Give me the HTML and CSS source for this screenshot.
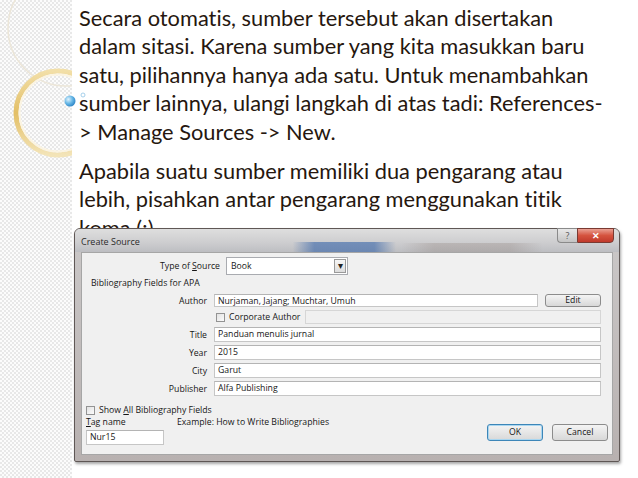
FILE: index.html
```html
<!DOCTYPE html>
<html>
<head>
<meta charset="utf-8">
<link rel="stylesheet" href="styles.css">
</head>
<body>
<div class="slide">
  <div class="strip"></div>
  <svg class="deco" width="100" height="180" viewBox="0 0 100 180">
    <defs>
      <clipPath id="clipstrip"><rect x="0" y="0" width="72" height="180"/></clipPath>
      <linearGradient id="gold" x1="0" y1="0" x2="0" y2="1">
        <stop offset="0" stop-color="#f2dfa8"/>
        <stop offset="0.5" stop-color="#e3bf66"/>
        <stop offset="1" stop-color="#f3e4b8"/>
      </linearGradient>
      <radialGradient id="blue" cx="0.35" cy="0.35" r="0.7">
        <stop offset="0" stop-color="#dff2fd"/>
        <stop offset="0.55" stop-color="#67b7e6"/>
        <stop offset="1" stop-color="#2d84c6"/>
      </radialGradient>
    </defs>
    <g clip-path="url(#clipstrip)">
      <circle cx="66" cy="28" r="58" fill="none" stroke="#ece6d8" stroke-width="1.5"/>
      <circle cx="58" cy="113" r="42" fill="none" stroke="url(#gold)" stroke-width="5"/>
      <circle cx="58" cy="113" r="38.5" fill="none" stroke="#fbf4e2" stroke-width="2"/>
    </g>
    <circle cx="70" cy="101" r="5.5" fill="url(#blue)"/>
    <circle cx="83" cy="95" r="2" fill="none" stroke="#8fc4e6" stroke-width="0.8"/>
  </svg>
  <div class="main">
    <p class="para">Secara otomatis, sumber tersebut akan disertakan<br>dalam sitasi. Karena sumber yang kita masukkan baru<br>satu, pilihannya hanya ada satu. Untuk menambahkan<br>sumber lainnya, ulangi langkah di atas tadi: References-<br>&gt; Manage Sources -&gt; New.</p>
    <p class="para">Apabila suatu sumber memiliki dua pengarang atau<br>lebih, pisahkan antar pengarang menggunakan titik<br>koma (;).</p>

    <div class="dialog">
      <div class="titlebar">
        <span class="title">Create Source</span>
        <div class="controls">
          <span class="btn-help">?</span>
          <span class="btn-close">✕</span>
        </div>
      </div>
      <div class="body">
        <div class="type-row">
          <span class="type-label">Type of <u>S</u>ource</span>
          <div class="select"><span class="select-text">Book</span><span class="select-arrow">▾</span></div>
        </div>
        <div class="section-head">Bibliography Fields for APA</div>
        <div class="fields">
          <span class="label">Author</span>
          <div class="field-line">
            <div class="input grow">Nurjaman, Jajang; Muchtar, Umuh</div>
            <span class="button edit">Edit</span>
          </div>
          <span class="label"></span>
          <div class="field-line corp">
            <span class="check"></span>
            <span class="check-text">Corporate Author</span>
            <div class="input disabled grow"></div>
          </div>
          <span class="label">Title</span>
          <div class="input">Panduan menulis jurnal</div>
          <span class="label">Year</span>
          <div class="input">2015</div>
          <span class="label">City</span>
          <div class="input">Garut</div>
          <span class="label">Publisher</span>
          <div class="input">Alfa Publishing</div>
        </div>
        <div class="show-row">
          <span class="check"></span>
          <span class="check-text">Show <u>A</u>ll Bibliography Fields</span>
        </div>
        <div class="footer">
          <div class="tag-col">
            <span class="tag-label"><u>T</u>ag name</span>
            <div class="input tag-input">Nur15</div>
          </div>
          <span class="example">Example: How to Write Bibliographies</span>
          <div class="actions">
            <span class="button ok">OK</span>
            <span class="button">Cancel</span>
          </div>
        </div>
      </div>
    </div>
  </div>
</div>
</body>
</html>
```

FILE: styles.css
```css
html, body {
  margin: 0;
  padding: 0;
  background: #ffffff;
}

.slide {
  position: relative;
  width: 638px;
  height: 478px;
  display: flex;
  overflow: hidden;
  background: #ffffff;
}

.strip {
  width: 72px;
  flex: none;
  background: repeating-conic-gradient(#e8e8e8 0 25%, #fcfcfc 0 50%) 0 0 / 4px 4px;
}

.deco {
  position: absolute;
  left: 0;
  top: 0;
  pointer-events: none;
}

.main {
  position: relative;
  flex: 1;
  padding: 4px 0 0 7px;
}

.para {
  margin: 0 0 11px 0;
  font-family: "Lato", "Open Sans", sans-serif;
  font-size: 21.8px;
  line-height: 28.4px;
  color: #26170f;
  white-space: nowrap;
  font-variant-ligatures: none;
}

/* Dialog window */
.dialog {
  position: absolute;
  left: 2px;
  top: 228px;
  width: 546px;
  height: 234px;
  box-sizing: border-box;
  border: 1px solid #5f5755;
  border-radius: 6px 6px 2px 2px;
  background: linear-gradient(#cbc8c8, #b8b1b0);
  padding: 0 6px 6px 6px;
  display: flex;
  flex-direction: column;
  box-shadow: 1px 2px 3px rgba(0, 0, 0, 0.35);
  font-family: "Open Sans", "Noto Sans", sans-serif;
  font-size: 8.7px;
  color: #161616;
}

.titlebar {
  height: 23px;
  margin: 0 -6px;
  padding: 0 5px 0 6px;
  display: flex;
  justify-content: space-between;
  align-items: flex-start;
  border-radius: 5px 5px 0 0;
  background:
    linear-gradient(90deg, rgba(40, 90, 165, 0) 40%, rgba(40, 90, 165, 0.55) 44%, rgba(40, 90, 165, 0.55) 55%, rgba(40, 90, 165, 0) 59%) 0 100% / 100% 45% no-repeat,
    linear-gradient(90deg, rgba(120, 100, 90, 0) 60%, rgba(120, 100, 90, 0.22) 66%, rgba(120, 100, 90, 0.22) 80%, rgba(120, 100, 90, 0) 86%) 0 100% / 100% 40% no-repeat,
    linear-gradient(#dedede, #cdcdcf 60%, #bdbec2);
}

.title {
  padding-top: 6px;
  font-size: 9px;
  color: #2a2a2a;
}

.controls {
  display: flex;
  margin-top: -1px;
}

.btn-help {
  width: 20px;
  height: 15px;
  box-sizing: border-box;
  border: 1px solid #8a8a8a;
  border-right: none;
  border-radius: 0 0 0 4px;
  background: linear-gradient(#e8e8e8, #c4c4c4);
  color: #555;
  font-size: 9px;
  line-height: 13px;
  text-align: center;
}

.btn-close {
  width: 37px;
  height: 15px;
  box-sizing: border-box;
  border: 1px solid #7a3a32;
  border-radius: 0 0 4px 0;
  background: linear-gradient(#eaa093, #d5533f 50%, #c0392b);
  color: #ffffff;
  font-size: 9px;
  font-weight: bold;
  line-height: 13px;
  text-align: center;
}

.body {
  flex: 1;
  background: #f0f0f0;
  border: 1px solid #a6a6a6;
  padding: 0 11px 0 0;
  display: flex;
  flex-direction: column;
}

.type-row {
  margin-top: 4px;
  height: 18px;
  display: flex;
  align-items: center;
  gap: 6px;
}

.type-label {
  width: 138px;
  text-align: right;
}

.select {
  width: 122px;
  height: 18px;
  box-sizing: border-box;
  border: 1px solid #a9abb0;
  background: #ffffff;
  display: flex;
  align-items: center;
  justify-content: space-between;
}

.select-text {
  padding-left: 4px;
}

.select-arrow {
  width: 12px;
  height: 14px;
  margin-right: 1px;
  box-sizing: border-box;
  border: 1px solid #9a9a9a;
  background: linear-gradient(#f6f6f6, #dcdcdc);
  font-size: 10px;
  line-height: 11px;
  text-align: center;
  color: #222;
}

.section-head {
  margin-top: 2px;
  height: 12px;
  line-height: 12px;
  padding-left: 9px;
}

.fields {
  margin-top: 5px;
  display: grid;
  grid-template-columns: 125px 1fr;
  grid-template-rows: 13px 14px 15px 15px 15px 15px;
  column-gap: 7px;
  row-gap: 3px;
  align-items: center;
}

.label {
  text-align: right;
}

.field-line {
  display: flex;
  align-items: center;
  height: 100%;
  gap: 7px;
}

.field-line.corp {
  gap: 0;
}

.input {
  height: 15px;
  box-sizing: border-box;
  border: 1px solid #c6c6c6;
  border-top-color: #b4b4b4;
  background: #ffffff;
  padding-left: 3px;
  line-height: 13px;
  white-space: nowrap;
  overflow: hidden;
}

.field-line .input {
  height: 100%;
}

.grow {
  flex: 1;
}

.input.disabled {
  background: #f0f0f0;
  border-color: #d6d6d6;
  margin-left: 5px;
}

.check {
  width: 9px;
  height: 9px;
  flex: none;
  box-sizing: border-box;
  border: 1px solid #939393;
  background: linear-gradient(135deg, #e2e2e2, #fbfbfb);
}

.corp .check {
  margin-left: 2px;
}

.check-text {
  padding-left: 4px;
}

.show-row {
  margin-top: 8px;
  height: 12px;
  display: flex;
  align-items: center;
  padding-left: 4px;
}

.footer {
  display: flex;
  align-items: flex-start;
  padding-left: 4px;
}

.tag-col {
  width: 91px;
  flex: none;
  display: flex;
  flex-direction: column;
}

.tag-label {
  height: 12px;
  line-height: 12px;
}

.tag-input {
  margin-top: 2px;
  width: 78px;
}

.example {
  flex: 1;
  height: 12px;
  line-height: 12px;
}

.actions {
  margin-top: 8px;
  margin-right: -7px;
  display: flex;
  gap: 9px;
}

.button {
  width: 56px;
  height: 17px;
  box-sizing: border-box;
  border: 1px solid #8c8c8c;
  border-radius: 3px;
  background: linear-gradient(#f4f4f4, #e6e6e6 50%, #d8d8d8);
  text-align: center;
  line-height: 15px;
  display: inline-block;
}

.button.ok {
  border-color: #3d86b8;
  box-shadow: inset 0 0 0 1px #a9d6f0;
}

.button.edit {
  height: 13px;
  line-height: 11px;
  flex: none;
}
```
